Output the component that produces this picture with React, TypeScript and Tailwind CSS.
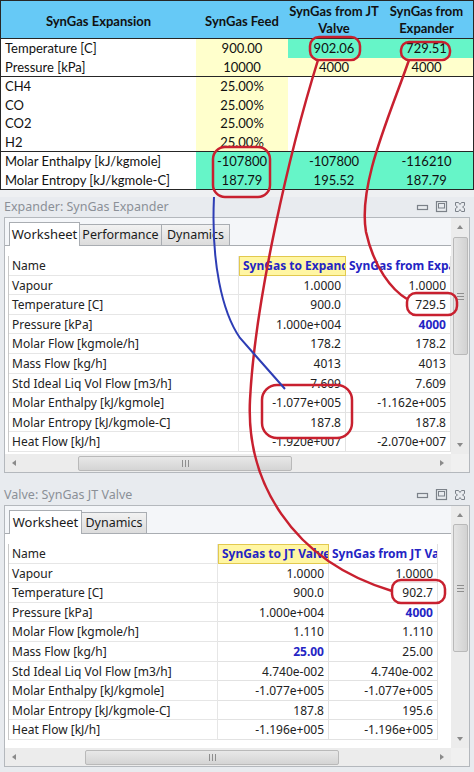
import React from 'react';

type TopRow = {
  label: string;
  feed: string;
  jt: string;
  exp: string;
  feedBg: string;
  restBg: string;
  divider?: boolean;
};

const YELLOW = 'bg-[#ffffcc]';
const GREEN = 'bg-[#66f5c8]';

const topRows: TopRow[] = [
  { label: 'Temperature [C]', feed: '900.00', jt: '902.06', exp: '729.51', feedBg: YELLOW, restBg: GREEN },
  { label: 'Pressure [kPa]', feed: '10000', jt: '4000', exp: '4000', feedBg: YELLOW, restBg: YELLOW, divider: true },
  { label: 'CH4', feed: '25.00%', jt: '', exp: '', feedBg: YELLOW, restBg: 'bg-white' },
  { label: 'CO', feed: '25.00%', jt: '', exp: '', feedBg: YELLOW, restBg: 'bg-white' },
  { label: 'CO2', feed: '25.00%', jt: '', exp: '', feedBg: YELLOW, restBg: 'bg-white' },
  { label: 'H2', feed: '25.00%', jt: '', exp: '', feedBg: YELLOW, restBg: 'bg-white', divider: true },
  { label: 'Molar Enthalpy [kJ/kgmole]', feed: '-107800', jt: '-107800', exp: '-116210', feedBg: GREEN, restBg: GREEN },
  { label: 'Molar Entropy [kJ/kgmole-C]', feed: '187.79', jt: '195.52', exp: '187.79', feedBg: GREEN, restBg: GREEN },
];

type Cell = { v: string; blue?: boolean };
type GridRow = { label: string; a: Cell; b: Cell };

const expanderRows: GridRow[] = [
  { label: 'Vapour', a: { v: '1.0000' }, b: { v: '1.0000' } },
  { label: 'Temperature [C]', a: { v: '900.0' }, b: { v: '729.5' } },
  { label: 'Pressure [kPa]', a: { v: '1.000e+004' }, b: { v: '4000', blue: true } },
  { label: 'Molar Flow [kgmole/h]', a: { v: '178.2' }, b: { v: '178.2' } },
  { label: 'Mass Flow [kg/h]', a: { v: '4013' }, b: { v: '4013' } },
  { label: 'Std Ideal Liq Vol Flow [m3/h]', a: { v: '7.609' }, b: { v: '7.609' } },
  { label: 'Molar Enthalpy [kJ/kgmole]', a: { v: '-1.077e+005' }, b: { v: '-1.162e+005' } },
  { label: 'Molar Entropy [kJ/kgmole-C]', a: { v: '187.8' }, b: { v: '187.8' } },
  { label: 'Heat Flow [kJ/h]', a: { v: '-1.920e+007' }, b: { v: '-2.070e+007' } },
];

const valveRows: GridRow[] = [
  { label: 'Vapour', a: { v: '1.0000' }, b: { v: '1.0000' } },
  { label: 'Temperature [C]', a: { v: '900.0' }, b: { v: '902.7' } },
  { label: 'Pressure [kPa]', a: { v: '1.000e+004' }, b: { v: '4000', blue: true } },
  { label: 'Molar Flow [kgmole/h]', a: { v: '1.110' }, b: { v: '1.110' } },
  { label: 'Mass Flow [kg/h]', a: { v: '25.00', blue: true }, b: { v: '25.00' } },
  { label: 'Std Ideal Liq Vol Flow [m3/h]', a: { v: '4.740e-002' }, b: { v: '4.740e-002' } },
  { label: 'Molar Enthalpy [kJ/kgmole]', a: { v: '-1.077e+005' }, b: { v: '-1.077e+005' } },
  { label: 'Molar Entropy [kJ/kgmole-C]', a: { v: '187.8' }, b: { v: '195.6' } },
  { label: 'Heat Flow [kJ/h]', a: { v: '-1.196e+005' }, b: { v: '-1.196e+005' } },
];

function SummaryTable() {
  return (
    <div className="h-[190px] shrink-0 border-[1.5px] border-[#262626] bg-white font-['Lato',sans-serif] text-[13px] text-[#111]">
      <div className="flex h-[38px] border-b border-[#262626] bg-[#66c9f6] font-bold leading-[17px]">
        <div className="flex w-[195px] items-center justify-center pt-1">SynGas Expansion</div>
        <div className="flex w-[92px] items-center justify-center pt-1">SynGas Feed</div>
        <div className="flex w-[92px] flex-col items-center justify-center text-center">
          <span>SynGas from JT</span>
          <span>Valve</span>
        </div>
        <div className="flex flex-1 flex-col items-center justify-center text-center">
          <span>SynGas from</span>
          <span>Expander</span>
        </div>
      </div>
      {topRows.map((r) => (
        <div key={r.label} className={`flex h-[18.5px] leading-[18.5px] ${r.divider ? 'box-content border-b border-[#262626]' : ''}`}>
          <div className="w-[195px] pl-1">{r.label}</div>
          <div className={`w-[92px] text-center ${r.feedBg}`}>{r.feed}</div>
          <div className={`w-[92px] text-center ${r.restBg}`}>{r.jt}</div>
          <div className={`flex-1 text-center ${r.restBg}`}>{r.exp}</div>
        </div>
      ))}
    </div>
  );
}

function WindowControls() {
  return (
    <svg width="50" height="12" viewBox="0 0 50 12" className="text-[#7b8189]">
      <rect x="1.5" y="4.5" width="10" height="4" fill="none" stroke="currentColor" strokeWidth="1.2" />
      <rect x="20.5" y="0.5" width="10" height="10" fill="none" stroke="currentColor" strokeWidth="1.2" />
      <rect x="22.5" y="2.5" width="6" height="4.5" fill="none" stroke="currentColor" strokeWidth="1" />
      <path
        d="M39.5 1.5h3l1.5 2 1.5-2h3v3l-2 1.5 2 1.5v3h-3l-1.5-2-1.5 2h-3v-3l2-1.5-2-1.5z"
        fill="none"
        stroke="currentColor"
        strokeWidth="1"
      />
    </svg>
  );
}

function Arrow({ dir }: { dir: 'up' | 'down' | 'left' | 'right' }) {
  const pts = {
    up: '0,5 3,1 6,5',
    down: '0,1 3,5 6,1',
    left: '5,0 1,3 5,6',
    right: '1,0 5,3 1,6',
  }[dir];
  return (
    <svg width="6" height="6" viewBox="0 0 6 6">
      <polygon points={pts} fill="#8a8a8a" />
    </svg>
  );
}

type WindowProps = {
  title: string;
  tabs: string[];
  tabWidths: string[];
  panelH: string;
  labelW: string;
  aW: string;
  bW: string;
  headA: string;
  headB: string;
  rows: GridRow[];
  vThumb: string;
  hThumb: string;
};

function SimWindow(p: WindowProps) {
  return (
    <div className="shrink-0 font-['Noto_Sans',sans-serif] text-[12px] text-[#222]">
      <div className="flex h-[20px] items-center justify-between pl-1 pr-[8px] text-[12.5px] text-[#8b9097]">
        <span>{p.title}</span>
        <WindowControls />
      </div>
      <div className={`mx-[4px] flex flex-col border border-[#b4b8bd] bg-[#f4f6f9] ${p.panelH}`}>
        <div className="flex min-h-0 flex-1">
          <div className="flex min-w-0 flex-1 flex-col bg-white">
            <div className="flex h-[28px] items-end border-b border-[#a9adb2] bg-[#f4f6f9] pl-[4px]">
              {p.tabs.map((t, i) => (
                <div
                  key={t}
                  className={
                    i === 0
                      ? `relative -mb-px flex h-[24px] items-center justify-center border border-b-0 border-[#a9adb2] bg-white text-[13px] text-[#1b1b1b] ${p.tabWidths[i]}`
                      : `flex h-[21px] items-center justify-center border border-b-0 border-l-0 border-[#a9adb2] bg-gradient-to-b from-[#f2f2f2] to-[#dcdcdc] text-[12.5px] text-[#1b1b1b] ${p.tabWidths[i]}`
                  }
                >
                  {t}
                </div>
              ))}
            </div>
            <div className="h-[10px]" />
            <div className="ml-[3px] flex flex-col border-l border-[#c9c9c9]">
              <div className="flex h-[19.6px] leading-[19.6px]">
                <div className={`${p.labelW} border-b border-r border-[#e6e6e6] pl-[3px]`}>Name</div>
                <div className={`${p.aW} overflow-hidden whitespace-nowrap border border-[#e2c94e] bg-[#fff6a3] pl-[3px] font-bold leading-[17.6px] text-[#2424c4]`}>
                  {p.headA}
                </div>
                <div className={`${p.bW} overflow-hidden whitespace-nowrap border-b border-r border-[#e2e2e2] pl-[3px] font-bold text-[#2424c4]`}>
                  {p.headB}
                </div>
              </div>
              {p.rows.map((r) => (
                <div key={r.label} className="flex h-[19.6px] leading-[19.6px]">
                  <div className={`${p.labelW} border-b border-r border-[#e6e6e6] pl-[3px]`}>{r.label}</div>
                  <div className={`${p.aW} border-b border-r border-[#e2e2e2] pr-[4px] text-right ${r.a.blue ? 'font-bold text-[#2424c4]' : ''}`}>
                    {r.a.v}
                  </div>
                  <div className={`${p.bW} border-b border-r border-[#e2e2e2] pr-[4px] text-right ${r.b.blue ? 'font-bold text-[#2424c4]' : ''}`}>
                    {r.b.v}
                  </div>
                </div>
              ))}
            </div>
          </div>
          <div className="flex w-[18px] flex-col bg-[#ececec]">
            <div className="flex h-[18px] items-center justify-center">
              <Arrow dir="up" />
            </div>
            <div className="flex-1">
              <div className={`mx-auto flex w-[15px] flex-col items-center justify-center gap-[2px] rounded-[2px] border border-[#b9b9b9] bg-gradient-to-r from-[#e4e4e4] to-[#d2d2d2] ${p.vThumb}`}>
                <div className="h-px w-[7px] bg-[#8e8e8e]" />
                <div className="h-px w-[7px] bg-[#8e8e8e]" />
                <div className="h-px w-[7px] bg-[#8e8e8e]" />
              </div>
            </div>
            <div className="flex h-[18px] items-center justify-center">
              <Arrow dir="down" />
            </div>
          </div>
        </div>
        <div className="flex h-[18px] shrink-0">
          <div className="flex flex-1 items-center bg-[#ececec]">
            <div className="flex h-[18px] w-[18px] items-center justify-center">
              <Arrow dir="left" />
            </div>
            <div className="flex flex-1 items-center">
              <div className={`flex h-[15px] items-center justify-center gap-[2px] rounded-[2px] border border-[#b9b9b9] bg-gradient-to-b from-[#e8e8e8] to-[#d4d4d4] ${p.hThumb}`}>
                <div className="h-[7px] w-px bg-[#8e8e8e]" />
                <div className="h-[7px] w-px bg-[#8e8e8e]" />
                <div className="h-[7px] w-px bg-[#8e8e8e]" />
              </div>
            </div>
            <div className="flex h-[18px] w-[18px] items-center justify-center">
              <Arrow dir="right" />
            </div>
          </div>
          <div className="w-[18px] bg-[#f0f0f0]" />
        </div>
      </div>
    </div>
  );
}

function Annotations() {
  const red = '#c8202f';
  return (
    <svg className="pointer-events-none absolute inset-0" width="474" height="772" viewBox="0 0 474 772">
      <g fill="none" stroke={red} strokeWidth="2.5">
        <rect x="310" y="37" width="50" height="23" rx="9" />
        <rect x="401" y="42" width="49" height="18" rx="8" />
        <rect x="213" y="147" width="57" height="50" rx="12" />
        <rect x="407" y="293" width="50" height="22" rx="9" />
        <rect x="262" y="385" width="90" height="53" rx="15" />
        <rect x="392" y="580" width="53" height="23" rx="9" />
        <path d="M318 60 C290 150 255 300 250 400 C246 480 290 560 392 591" />
        <path d="M409 60 C388 120 358 185 366 232 C374 268 392 290 407 299" />
      </g>
      <path d="M214 197 C211 262 222 312 240 338 L285 389" fill="none" stroke="#2d3db5" strokeWidth="2" />
    </svg>
  );
}

export default function App() {
  return (
    <div className="relative flex h-[772px] w-[474px] flex-col overflow-hidden bg-[#e8ebef]">
      <SummaryTable />
      <div className="h-[7px] shrink-0 bg-[#eef0f2]" />
      <SimWindow
        title="Expander: SynGas Expander"
        tabs={['Worksheet', 'Performance', 'Dynamics']}
        tabWidths={['w-[71px]', 'w-[82px]', 'w-[68px]']}
        panelH="h-[256px]"
        labelW="w-[230px]"
        aW="w-[107px]"
        bW="w-[105px]"
        headA="SynGas to Expander"
        headB="SynGas from Expander"
        rows={expanderRows}
        vThumb="mt-px h-[118px]"
        hThumb="ml-[55px] w-[214px]"
      />
      <div className="h-[12px] shrink-0" />
      <SimWindow
        title="Valve: SynGas JT Valve"
        tabs={['Worksheet', 'Dynamics']}
        tabWidths={['w-[73px]', 'w-[65px]']}
        panelH="h-[262px]"
        labelW="w-[209px]"
        aW="w-[111px]"
        bW="w-[109px]"
        headA="SynGas to JT Valve"
        headB="SynGas from JT Valve"
        rows={valveRows}
        vThumb="h-[128px]"
        hThumb="ml-[62px] w-[254px]"
      />
      <Annotations />
    </div>
  );
}
